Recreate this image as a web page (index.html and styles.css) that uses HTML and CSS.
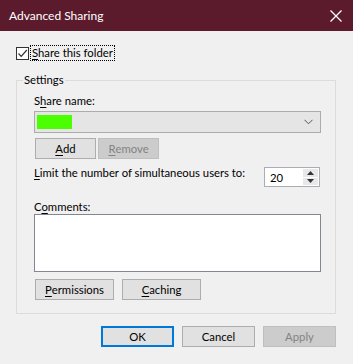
FILE: index.html
```html
<!DOCTYPE html>
<html>
<head>
<title>Advanced Sharing</title>
<meta charset="UTF-8">
<link rel="stylesheet" href="styles.css">
</head>
<body>
	<div class="window">
		<div class="titlebar">
			<span class="title">Advanced Sharing</span>
			<svg class="close" width="12" height="12" viewBox="0 0 12 12">
				<path d="M0.5 0.5 L11.5 11.5 M11.5 0.5 L0.5 11.5" stroke="#ffffff" stroke-width="1.3" fill="none"/>
			</svg>
		</div>
		<div class="content">
			<div class="check-row">
				<span class="checkbox">
					<svg width="11" height="11" viewBox="0 0 11 11">
						<path d="M1.5 5.5 L4.2 8.3 L9.8 2" stroke="#333" stroke-width="1.2" fill="none"/>
					</svg>
				</span>
				<span class="focus-label"><u>S</u>hare this folder</span>
			</div>
			<fieldset class="group">
				<legend>Settings</legend>
				<div class="label">S<u>h</u>are name:</div>
				<div class="combo">
					<span class="swatch"></span>
					<svg class="chevron" width="9" height="6" viewBox="0 0 9 6">
						<path d="M0.5 0.8 L4.5 4.8 L8.5 0.8" stroke="#555" stroke-width="1" fill="none"/>
					</svg>
				</div>
				<div class="btn-row">
					<span class="btn btn-small"><u>A</u>dd</span>
					<span class="btn btn-small disabled"><u>R</u>emove</span>
				</div>
				<div class="limit-row">
					<span class="limit-text"><u>L</u>imit the number of simultaneous users to:</span>
					<div class="spinner">
						<span class="spin-value">20</span>
						<div class="spin-btns">
							<span class="spin-btn">
								<svg width="7" height="4" viewBox="0 0 7 4"><path d="M0 4 L3.5 0 L7 4 Z" fill="#333"/></svg>
							</span>
							<span class="spin-btn">
								<svg width="7" height="4" viewBox="0 0 7 4"><path d="M0 0 L3.5 4 L7 0 Z" fill="#333"/></svg>
							</span>
						</div>
					</div>
				</div>
				<div class="label label-comments">C<u>o</u>mments:</div>
				<div class="textarea"></div>
				<div class="btn-row btn-row-wide">
					<span class="btn btn-wide"><u>P</u>ermissions</span>
					<span class="btn btn-wide"><u>C</u>aching</span>
				</div>
			</fieldset>
			<div class="footer">
				<span class="btn btn-dialog default">OK</span>
				<span class="btn btn-dialog">Cancel</span>
				<span class="btn btn-dialog disabled">Apply</span>
			</div>
		</div>
	</div>
</body>
</html>
```
FILE: styles.css
```css
html, body {
	margin: 0;
	padding: 0;
}

body {
	font-family: Lato, "Noto Sans", sans-serif;
	font-size: 11.3px;
	color: #000000;
	background-color: #f0f0f0;
}

u {
	text-decoration: underline;
	text-underline-offset: 2px;
}

.window {
	width: 353px;
	height: 364px;
	background-color: #f0f0f0;
	display: flex;
	flex-direction: column;
	overflow: hidden;
}

.titlebar {
	height: 31px;
	flex: none;
	background-color: #5b1b2d;
	color: #ffffff;
	display: flex;
	align-items: center;
	justify-content: space-between;
	padding: 0 11px 0 9px;
}

.title {
	font-size: 12px;
	margin-top: -1px;
}

.close {
	display: block;
}

.content {
	padding: 15px 17px 0 16px;
}

.check-row {
	display: flex;
	align-items: center;
	height: 14px;
}

.checkbox {
	width: 11px;
	height: 11px;
	border: 1px solid #333333;
	background-color: #ffffff;
	display: flex;
	align-items: center;
	justify-content: center;
}

.focus-label {
	margin-left: 2px;
	outline: 1px dotted #000000;
	padding: 0 1px;
	line-height: 14px;
}

.group {
	margin: 13px 0 0 0;
	padding: 2px 14px 13px 17px;
	border: 1px solid #dcdcdc;
	border-radius: 0;
	min-width: 0;
}

.group legend {
	padding: 0 1px;
	margin-left: -11px;
	line-height: 14px;
}

.label {
	line-height: 16px;
	margin-top: 4px;
}

.combo {
	box-sizing: border-box;
	margin-top: 2px;
	height: 22px;
	border: 1px solid #acacac;
	background-color: #e5e5e5;
	display: flex;
	align-items: center;
	justify-content: space-between;
	padding: 0 7px 0 2px;
}

.swatch {
	width: 35px;
	height: 14px;
	background-color: #4cff00;
}

.btn-row {
	display: flex;
	gap: 2px;
	margin-top: 5px;
	padding-left: 1px;
}

.btn {
	box-sizing: border-box;
	height: 21px;
	border: 1px solid #adadad;
	background-color: #e1e1e1;
	display: flex;
	align-items: center;
	justify-content: center;
	line-height: 14px;
}

.btn.disabled {
	background-color: #cccccc;
	border-color: #bfbfbf;
	color: #838383;
}

.btn-small {
	width: 61px;
}

.limit-row {
	margin-top: 6px;
	display: flex;
	align-items: flex-start;
	justify-content: space-between;
	padding-right: 1px;
}

.limit-text {
	white-space: nowrap;
	line-height: 16px;
}

.spinner {
	box-sizing: border-box;
	width: 56px;
	height: 20px;
	margin-top: 2px;
	border: 1px solid #abadb3;
	background-color: #ffffff;
	display: flex;
	align-items: center;
	justify-content: space-between;
	padding: 1px 1px 1px 5px;
}

.spin-btns {
	display: flex;
	flex-direction: column;
	gap: 1px;
	height: 16px;
}

.spin-btn {
	width: 15px;
	flex: 1;
	background-color: #e8e8e8;
	border: 0;
	display: flex;
	align-items: center;
	justify-content: center;
}

.label-comments {
	line-height: 14px;
	margin-top: 13px;
}

.textarea {
	height: 56px;
	border: 1px solid #828790;
	background-color: #ffffff;
}

.btn-row-wide {
	gap: 8px;
	margin-top: 7px;
}

.btn-wide {
	width: 79px;
}

.footer {
	display: flex;
	justify-content: flex-end;
	gap: 8px;
	margin-top: 12px;
}

.btn-dialog {
	width: 73px;
	height: 21px;
}

.btn.default {
	border: 2px solid #0078d7;
}
```
